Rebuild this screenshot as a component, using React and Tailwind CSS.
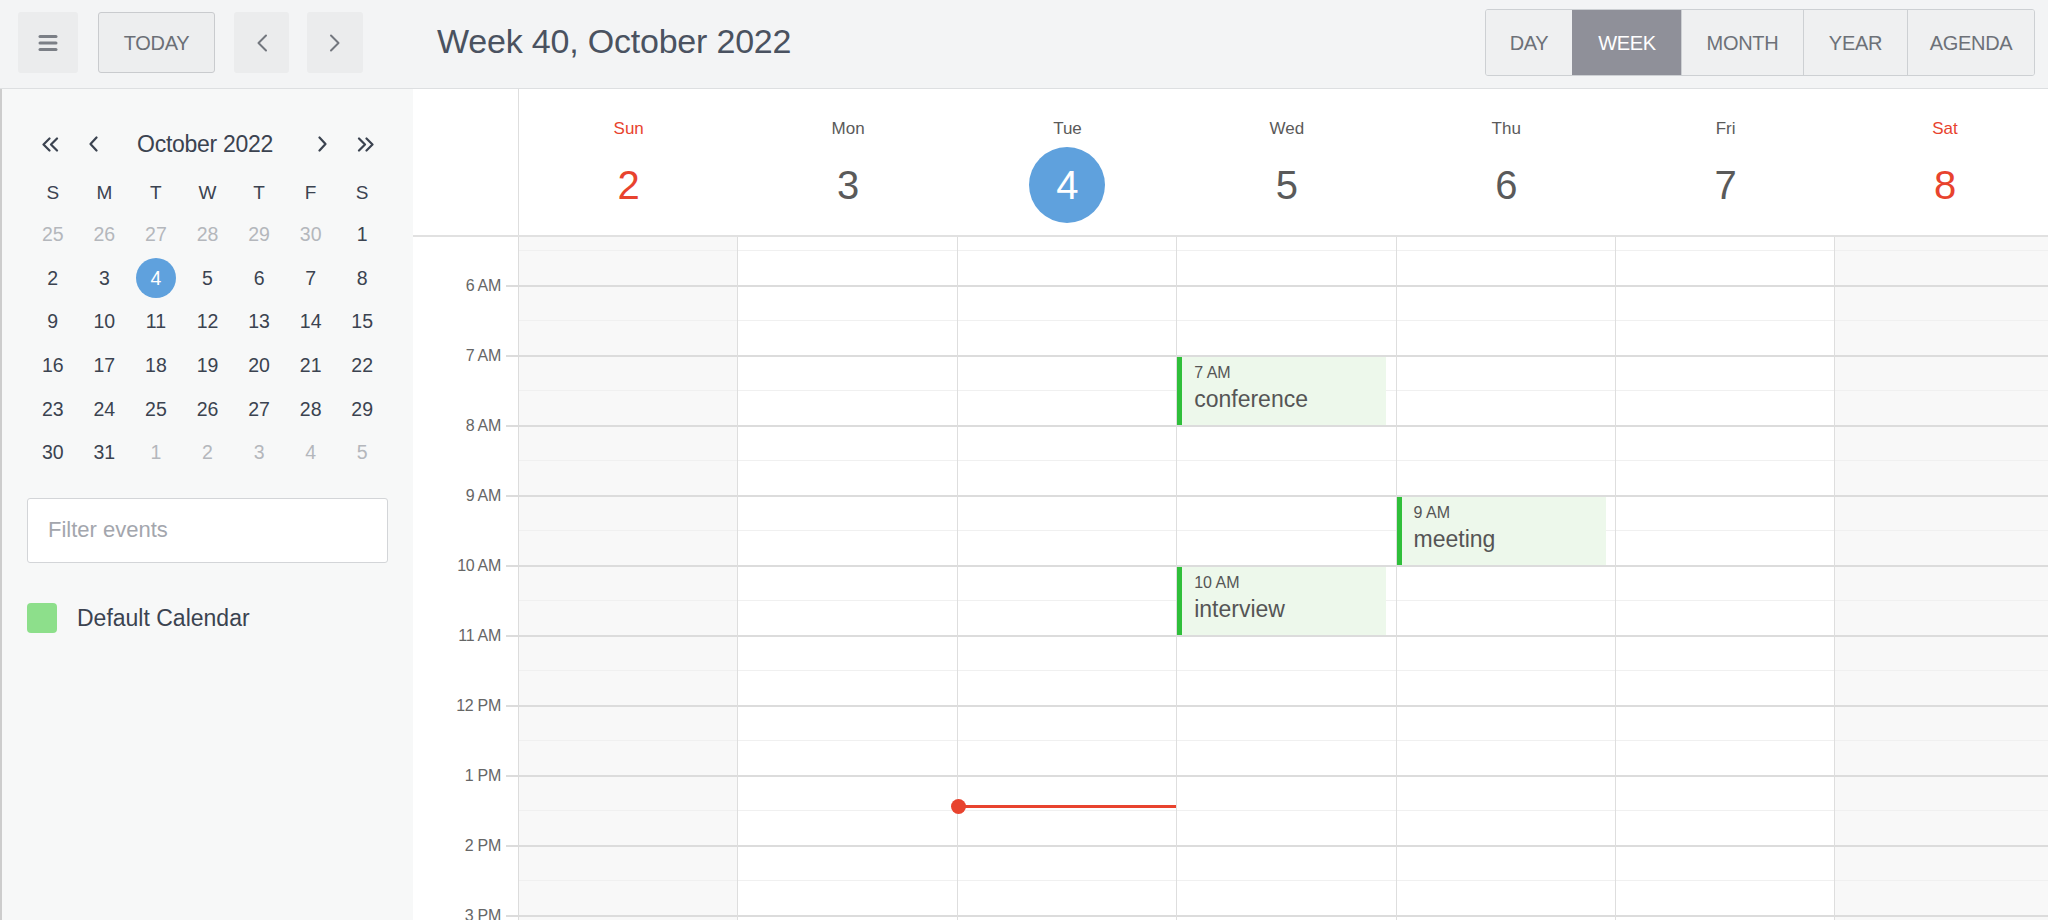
import React from "react";

const WEEK = [
  { name: "Sun", num: 2, weekend: true },
  { name: "Mon", num: 3 },
  { name: "Tue", num: 4, today: true },
  { name: "Wed", num: 5 },
  { name: "Thu", num: 6 },
  { name: "Fri", num: 7 },
  { name: "Sat", num: 8, weekend: true },
];

const MINI = [
  [[25, 1], [26, 1], [27, 1], [28, 1], [29, 1], [30, 1], [1]],
  [[2], [3], [4, 0, 1], [5], [6], [7], [8]],
  [[9], [10], [11], [12], [13], [14], [15]],
  [[16], [17], [18], [19], [20], [21], [22]],
  [[23], [24], [25], [26], [27], [28], [29]],
  [[30], [31], [1, 1], [2, 1], [3, 1], [4, 1], [5, 1]],
];

// slots start at 5:30 AM, 35px each
const SLOTS = Array.from({ length: 20 }, (_, i) => {
  const mins = 330 + i * 30;
  const hour = Math.floor(mins / 60);
  const isHour = mins % 60 === 0;
  const h12 = hour % 12 === 0 ? 12 : hour % 12;
  return { isHour, label: isHour ? `${h12} ${hour < 12 ? "AM" : "PM"}` : null };
});

const EVENTS = {
  3: [
    { top: 120, time: "7 AM", title: "conference" },
    { top: 330, time: "10 AM", title: "interview" },
  ],
  4: [{ top: 260, time: "9 AM", title: "meeting" }],
};

const Chevron = ({ dir = "left", className = "" }) => (
  <svg width="12" height="18" viewBox="0 0 12 18" className={className} fill="none" stroke="currentColor" strokeWidth="2" strokeLinecap="round" strokeLinejoin="round">
    {dir === "left" ? <polyline points="10,1.5 2.5,9 10,16.5" /> : <polyline points="2,1.5 9.5,9 2,16.5" />}
  </svg>
);

const SmallChevron = ({ dir = "left" }) => (
  <svg width="11" height="16" viewBox="0 0 11 16" fill="none" stroke="currentColor" strokeWidth="2.2" strokeLinecap="round" strokeLinejoin="round">
    {dir === "left" ? <polyline points="8.5,1.5 2.5,8 8.5,14.5" /> : <polyline points="2.5,1.5 8.5,8 2.5,14.5" />}
  </svg>
);

const DoubleChevron = ({ dir = "left" }) => (
  <svg width="17" height="15" viewBox="0 0 17 15" fill="none" stroke="currentColor" strokeWidth="2.2" strokeLinecap="round" strokeLinejoin="round">
    {dir === "left" ? (
      <>
        <polyline points="7.5,1.5 1.5,7.5 7.5,13.5" />
        <polyline points="15,1.5 9,7.5 15,13.5" />
      </>
    ) : (
      <>
        <polyline points="2,1.5 8,7.5 2,13.5" />
        <polyline points="9.5,1.5 15.5,7.5 9.5,13.5" />
      </>
    )}
  </svg>
);

const Header = () => (
  <header className="h-[89px] shrink-0 flex items-start bg-[#f3f4f5] border-b border-[#dddfe1]">
    <button className="mt-[12px] ml-[18px] w-[60px] h-[61px] rounded-[3px] bg-[#ebeced] flex items-center justify-center text-[#7b7f86]">
      <svg width="20" height="18" viewBox="0 0 20 18" fill="none" stroke="currentColor" strokeWidth="3" strokeLinecap="round">
        <line x1="2" y1="2.5" x2="18" y2="2.5" />
        <line x1="2" y1="9" x2="18" y2="9" />
        <line x1="2" y1="15.5" x2="18" y2="15.5" />
      </svg>
    </button>
    <button className="mt-[12px] ml-[20px] w-[117px] h-[61px] rounded-[3px] bg-[#edeeef] border border-[#c9cbce] text-[20px] text-[#6b6f76] tracking-[-0.3px]">
      TODAY
    </button>
    <button className="mt-[12px] ml-[19px] w-[55px] h-[61px] rounded-[3px] bg-[#ebeced] flex items-center justify-center text-[#73777e]">
      <Chevron dir="left" />
    </button>
    <button className="mt-[12px] ml-[18px] w-[56px] h-[61px] rounded-[3px] bg-[#ebeced] flex items-center justify-center text-[#73777e]">
      <Chevron dir="right" />
    </button>
    <h1 className="ml-[74px] mt-[21px] text-[34px] leading-[40px] text-[#4a5260] tracking-[-0.2px]">Week 40, October 2022</h1>
    <div className="ml-auto mr-[13px] mt-[9px] flex h-[67px] border border-[#cdd0d3] rounded-[3px] overflow-hidden text-[20px] text-[#6d7178] tracking-[-0.3px]">
      <button className="w-[86px] bg-[#eff0f1]">DAY</button>
      <button className="w-[109px] bg-[#8f9099] text-white border-l border-[#8f9099]">WEEK</button>
      <button className="w-[122px] bg-[#eff0f1] border-l border-[#cdd0d3]">MONTH</button>
      <button className="w-[104px] bg-[#eff0f1] border-l border-[#cdd0d3]">YEAR</button>
      <button className="w-[127px] bg-[#eff0f1] border-l border-[#cdd0d3]">AGENDA</button>
    </div>
  </header>
);

const Sidebar = () => (
  <aside className="w-[413px] shrink-0 bg-[#f7f8f8] border-l-2 border-[#cdcdcd] pl-[25px] pr-[25px] text-[#3b4350]">
    <div className="flex items-center h-[40px] mt-[35px]">
      <button className="w-[46px] flex justify-center"><DoubleChevron dir="left" /></button>
      <button className="w-[40px] flex justify-center"><SmallChevron dir="left" /></button>
      <div className="w-[184px] text-center text-[23px] tracking-[-0.3px]">October 2022</div>
      <button className="w-[50px] flex justify-center"><SmallChevron dir="right" /></button>
      <button className="w-[36px] flex justify-center"><DoubleChevron dir="right" /></button>
    </div>
    <div className="grid grid-cols-7 h-[40px] mt-[9px] items-center text-center text-[19px]">
      {["S", "M", "T", "W", "T", "F", "S"].map((l, i) => (
        <span key={i}>{l}</span>
      ))}
    </div>
    {MINI.map((row, r) => (
      <div key={r} className="grid grid-cols-7 h-[43.6px] items-center justify-items-center text-[19.5px]">
        {row.map(([n, other, sel], c) =>
          sel ? (
            <span key={c} className="w-[40px] h-[40px] rounded-full bg-[#5fa1dd] text-white flex items-center justify-center">{n}</span>
          ) : (
            <span key={c} className={other ? "text-[#b4b7bc]" : "text-[#3b4350]"}>{n}</span>
          )
        )}
      </div>
    ))}
    <input
      readOnly
      placeholder="Filter events"
      className="block mt-[23px] h-[65px] w-full border border-[#d3d5d8] rounded-[3px] bg-white px-[20px] text-[22px] outline-none placeholder:text-[#a3a6ad]"
    />
    <div className="mt-[38px] flex items-center gap-[20px]">
      <span className="w-[30px] h-[30px] rounded-[4px] bg-[#8ddf8b]" />
      <span className="text-[23px]">Default Calendar</span>
    </div>
  </aside>
);

const DayColumn = ({ day, idx }) => (
  <div className={`relative w-[219.4px] shrink-0 border-r border-[#dedede] ${day.weekend ? "bg-[#f8f8f8]" : "bg-white"}`}>
    <div className="h-[13px]" />
    {SLOTS.map((s, i) => (
      <div key={i} className={s.isHour ? "h-[35px] border-t-2 border-[#dcdcdc]" : "h-[35px] border-t border-[#f0f0f0]"} />
    ))}
    {(EVENTS[idx] || []).map((e) => (
      <div key={e.title} className="absolute left-0 w-[209px] h-[68px] bg-[#edf8eb] border-l-[5px] border-[#2fbf3a] pl-[12px] pt-[6px] text-[#555]" style={{ top: e.top }}>
        <div className="text-[16px] leading-[20px]">{e.time}</div>
        <div className="text-[23px] leading-[26px] mt-[3px]">{e.title}</div>
      </div>
    ))}
    {day.today && (
      <>
        <div className="absolute top-[568px] left-0 right-0 h-[3px] bg-[#e8432e]" />
        <div className="absolute top-[562px] -left-[7px] w-[15px] h-[15px] rounded-full bg-[#e8432e]" />
      </>
    )}
  </div>
);

const WeekView = () => (
  <main className="flex-1 min-w-0 overflow-hidden flex flex-col bg-white">
    <div className="h-[148px] shrink-0 flex border-b-2 border-[#e1e1e1]">
      <div className="w-[106px] shrink-0 border-r border-[#dedede]" />
      {WEEK.map((d) => {
        const red = d.weekend ? "text-[#e8432e]" : "text-[#5a5a5a]";
        return (
          <div key={d.name} className="w-[219.4px] shrink-0 flex flex-col items-center pt-[30px]">
            <div className={`text-[17px] leading-[20px] ${red}`}>{d.name}</div>
            {d.today ? (
              <div className="mt-[8px] w-[76px] h-[76px] rounded-full bg-[#5fa1dd] text-white text-[40px] flex items-center justify-center">{d.num}</div>
            ) : (
              <div className={`mt-[8px] h-[76px] text-[40px] flex items-center ${red}`}>{d.num}</div>
            )}
          </div>
        );
      })}
    </div>
    <div className="flex-1 flex overflow-hidden">
      <div className="w-[106px] shrink-0 border-r border-[#dcdcdc] bg-white">
        <div className="h-[13px]" />
        {SLOTS.map((s, i) => (
          <div key={i} className="relative h-[35px]">
            {s.isHour && (
              <>
                <div className="absolute top-0 right-0 w-[12px] border-t-2 border-[#dcdcdc]" />
                <span className="absolute right-[17px] -top-[9px] text-[16px] leading-[20px] text-[#666] whitespace-nowrap tracking-[-0.3px]">{s.label}</span>
              </>
            )}
          </div>
        ))}
      </div>
      {WEEK.map((d, i) => (
        <DayColumn key={d.name} day={d} idx={i} />
      ))}
    </div>
  </main>
);

export default function App() {
  return (
    <div className="w-full h-[920px] overflow-hidden flex flex-col bg-white font-['Liberation_Sans',Arial,sans-serif]">
      <Header />
      <div className="flex-1 flex min-h-0">
        <Sidebar />
        <WeekView />
      </div>
    </div>
  );
}
